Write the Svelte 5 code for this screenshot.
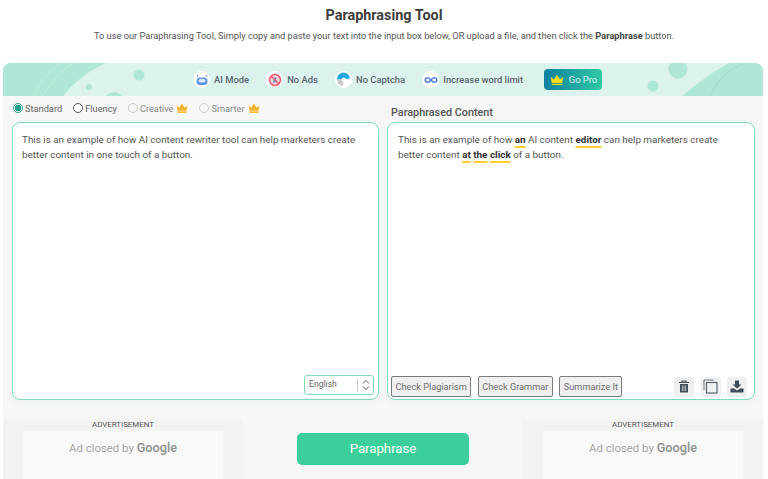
<script lang="ts">
  const modes = [
    { label: 'Standard', checked: true },
    { label: 'Fluency' },
    { label: 'Creative', pro: true },
    { label: 'Smarter', pro: true }
  ];
  const actions = ['Check Plagiarism', 'Check Grammar', 'Summarize It'];
</script>

{#snippet crown(w = 13)}
  <svg class="crown" width={w} height={w * 0.85} viewBox="0 0 20 17">
    <path d="M1 4l4.500 4L10 1l4.500 7L19 4l-1.500 9h-15z" fill="currentColor" />
    <rect x="2.500" y="14" width="15" height="2.500" fill="currentColor" />
  </svg>
{/snippet}

{#snippet ad()}
  <div class="ad">
    <div class="ad-label">ADVERTISEMENT</div>
    <div class="ad-box">Ad closed by <b>Google</b></div>
  </div>
{/snippet}

<header>
  <h1>Paraphrasing Tool</h1>
  <p>To use our Paraphrasing Tool, Simply copy and paste your text into the input box below, OR upload a file, and then click the <b>Paraphrase</b> button.</p>
</header>

<main>
  <div class="banner">
    <svg class="deco" width="760" height="33" viewBox="0 0 760 33">
      <path d="M0 0H103C85 8 70 20 60 33H0z" fill="#aee6d8" />
      <path d="M30 33C36 20 45 8 58 0M40 33C48 20 58 8 70 0" fill="none" stroke="#c3ecdf" stroke-width="1" />
      <circle cx="136" cy="12" r="5.500" fill="#aee6d8" />
      <circle cx="86" cy="24" r="3" fill="#aee6d8" />
      <circle cx="111" cy="39" r="10" fill="#aee6d8" />
      <circle cx="675" cy="6" r="9.500" fill="#aee6d8" />
      <circle cx="650" cy="23" r="5.500" fill="#aee6d8" />
      <path d="M679 33C695 20 710 8 727 0H760V33z" fill="#aee6d8" />
      <path d="M708 33C712 20 722 8 742 0" fill="none" stroke="#9fdfcf" stroke-width="1" />
    </svg>

    <div class="feature">
      <span class="ico">
        <svg width="14" height="14" viewBox="0 0 14 14">
          <rect x="1.500" y="4.500" width="11" height="7.500" rx="3.500" fill="#5f93e6" />
          <rect x="3.500" y="6" width="7" height="3.500" rx="1.700" fill="#dbe8fb" />
          <path d="M3 4L2 2M11 4l1-2" stroke="#5f93e6" stroke-width="1" />
        </svg>
      </span>
      AI Mode
    </div>
    <div class="feature">
      <span class="ico">
        <svg width="14" height="14" viewBox="0 0 14 14">
          <circle cx="7" cy="7" r="5.500" fill="#fbd3da" stroke="#ef5a6f" stroke-width="1.500" />
          <path d="M5 9.500l1.500-5h2l-1 5z" fill="#4f8fe0" />
          <path d="M3 3l8 8" stroke="#ef5a6f" stroke-width="1.500" />
        </svg>
      </span>
      No Ads
    </div>
    <div class="feature">
      <span class="ico">
        <svg width="15" height="15" viewBox="0 0 14 14">
          <path d="M1 7A6 6 0 0 1 13 6L9.500 6.500A2.600 2.600 0 0 0 5 7z" fill="#1ba9e0" />
          <path d="M1 7H5L7 9.500 6 13A6 6 0 0 1 1 7z" fill="#c9c9c9" />
        </svg>
      </span>
      No Captcha
    </div>
    <div class="feature">
      <span class="ico">
        <svg width="14" height="14" viewBox="0 0 14 14">
          <path d="M7 7C5.500 5 4.500 4.800 3.500 4.800a2.200 2.200 0 0 0 0 4.400C4.500 9.200 5.500 9 7 7s2.500-2.200 3.500-2.200a2.200 2.200 0 0 1 0 4.400C9.500 9.200 8.500 9 7 7z" fill="none" stroke="#4f7fdc" stroke-width="1.500" />
        </svg>
      </span>
      Increase word limit
    </div>
    <div class="go-pro">
      <span class="go-crown">{@render crown(14)}</span>
      Go Pro
    </div>
  </div>

  <div class="workspace">
    <section class="col">
      <div class="modes">
        {#each modes as m}
          <label class="mode" class:disabled={m.pro}>
            <span class="radio" class:checked={m.checked}></span>
            {m.label}
            {#if m.pro}<span class="pro-crown">{@render crown(12)}</span>{/if}
          </label>
        {/each}
      </div>
      <div class="editor">
        <p>This is an example of how AI content rewriter tool can help marketers create better content in one touch of a button.</p>
        <div class="editor-foot end">
          <div class="lang">
            <span class="lang-name">English</span>
            <span class="lang-arrows">
              <svg width="8" height="12" viewBox="0 0 8 12"><path d="M1 4.500L4 1.500 7 4.500M1 7.500L4 10.500 7 7.500" fill="none" stroke="#555" stroke-width="1" /></svg>
            </span>
          </div>
        </div>
      </div>
    </section>

    <section class="col result">
      <h2>Paraphrased Content</h2>
      <div class="editor">
        <p>This is an example of how <mark>an</mark> AI content <mark>editor</mark> can help marketers create better content <mark>at</mark> <mark>the</mark> <mark>click</mark> of a button.</p>
        <div class="editor-foot">
          {#each actions as a}
            <button class="action">{a}</button>
          {/each}
          <div class="tools">
            <span class="tool">
              <svg width="12" height="13" viewBox="0 0 12 13">
                <path d="M1 2.500h10M4 2.500V1h4v1.500" fill="none" stroke="#3f4c5a" stroke-width="1.200" />
                <path d="M2 4h8v8.500H2z" fill="#3f4c5a" />
                <path d="M4.300 5.500v5.500M6 5.500v5.500M7.700 5.500v5.500" stroke="#eee" stroke-width="0.700" />
              </svg>
            </span>
            <span class="tool">
              <svg width="15" height="15" viewBox="0 0 15 15">
                <path d="M10.500 1H1v10" fill="none" stroke="#6b7480" stroke-width="1" />
                <rect x="3.500" y="3.500" width="10.500" height="10.500" fill="none" stroke="#5a6470" stroke-width="1.200" />
              </svg>
            </span>
            <span class="tool">
              <svg width="14" height="13" viewBox="0 0 14 13">
                <path d="M5 0.500h4V4.500h2.500L7 8.500 2.500 4.500H5z" fill="#3f4c5a" />
                <path d="M0.500 8.500H4L7 10.500 10 8.500h3.500V12.500H0.500z" fill="#3f4c5a" />
              </svg>
            </span>
          </div>
        </div>
      </div>
    </section>
  </div>

  <div class="bottom">
    {@render ad()}
    <div class="submit"><button class="paraphrase">Paraphrase</button></div>
    {@render ad()}
  </div>
</main>

<style>
  :global(body) {
    margin: 0;
    background: #fff;
    overflow: hidden;
    height: 479px;
    font-family: Roboto, "Liberation Sans", sans-serif;
    color: #555;
  }

  header {
    height: 63px;
    text-align: center;
    overflow: hidden;
  }
  h1 {
    margin: 7px 0 0;
    font-size: 14.4px;
    line-height: 17px;
    font-weight: 700;
    color: #3d3d3d;
  }
  header p {
    margin: 5px 0 0;
    font-size: 9.25px;
    line-height: 14px;
    color: #555;
  }
  header b {
    color: #444;
  }

  main {
    margin: 0 5px 0 3px;
    height: 416px;
    background: #f7f7f7;
    border-radius: 8px 8px 0 0;
    overflow: hidden;
  }

  .banner {
    position: relative;
    height: 33px;
    background: #dcf2ed;
    display: flex;
    align-items: center;
    padding-left: 190px;
    font-size: 9.4px;
    font-weight: 500;
    color: #5b6670;
  }
  .deco {
    position: absolute;
    left: 0;
    top: 0;
  }
  .feature {
    position: relative;
    display: flex;
    align-items: center;
    gap: 4px;
    margin-right: 17.2px;
    white-space: nowrap;
  }
  .ico {
    width: 17px;
    height: 17px;
    border-radius: 50%;
    background: #fff;
    display: flex;
    align-items: center;
    justify-content: center;
  }
  .go-pro {
    position: relative;
    margin-left: 3.5px;
    box-sizing: border-box;
    width: 58px;
    height: 21px;
    padding-left: 6px;
    border-radius: 4px;
    background: linear-gradient(90deg, #10809f, #2ec9a4);
    color: #dff5ee;
    font-weight: 400;
    display: flex;
    align-items: center;
    gap: 5px;
  }
  .go-crown {
    display: flex;
    color: #f2dc1e;
  }

  .workspace {
    display: grid;
    grid-template-columns: 367px 368px;
    gap: 8px;
    padding: 0 7px 0 9px;
  }
  .col {
    display: flex;
    flex-direction: column;
  }
  .modes {
    height: 24px;
    margin-bottom: 2px;
    display: flex;
    align-items: center;
    padding-left: 1px;
    gap: 11px;
    font-size: 9.25px;
    color: #666;
  }
  .mode {
    display: flex;
    align-items: center;
    gap: 2px;
  }
  .mode.disabled {
    color: #8a8a8a;
  }
  .radio {
    box-sizing: border-box;
    width: 10px;
    height: 10px;
    border-radius: 50%;
    border: 1px solid #555;
    background: #fff;
  }
  .radio.checked {
    border-color: #1f9d88;
    background: radial-gradient(circle, #1f9d88 0 3px, #fff 3.5px);
  }
  .disabled .radio {
    border-color: #ccc;
    background: #f7f7f7;
  }
  .pro-crown {
    display: flex;
    color: #f3b32a;
    margin-left: 1px;
  }
  h2 {
    margin: 0;
    height: 26px;
    padding: 10px 0 0 4px;
    box-sizing: border-box;
    font-size: 10.8px;
    line-height: 14px;
    font-weight: 500;
    color: #555;
  }

  .editor {
    box-sizing: border-box;
    height: 278px;
    border: 1px solid #7edcb9;
    border-radius: 8px;
    background: #fff;
    box-shadow: 0 2px 8px rgba(90, 210, 170, 0.08);
    display: flex;
    flex-direction: column;
    justify-content: space-between;
    padding: 10px 3px 2px;
  }
  .editor p {
    margin: 0 6px;
    font-size: 9.9px;
    line-height: 14.5px;
    color: #555;
  }
  .result .editor p {
    margin-left: 7px;
  }
  mark {
    background: none;
    color: #333;
    font-weight: 700;
    text-decoration: underline;
    text-decoration-color: #fbcf33;
    text-decoration-thickness: 1.5px;
    text-underline-offset: 2.5px;
  }
  .editor-foot {
    display: flex;
    align-items: center;
    gap: 6.5px;
  }
  .editor-foot.end {
    justify-content: flex-end;
  }

  .lang {
    box-sizing: border-box;
    width: 70px;
    height: 20px;
    margin: 0 1px 2px 0;
    border: 1px solid #7edcb9;
    border-radius: 3px;
    background: #fff;
    display: flex;
    align-items: center;
    justify-content: space-between;
    font-size: 8.6px;
    color: #666;
  }
  .lang-name {
    padding-left: 4px;
    margin-top: -2px;
  }
  .lang-arrows {
    display: flex;
    align-items: center;
    border-left: 1px solid #ccc;
    height: 13px;
    padding: 0 3px 0 4px;
  }

  .action {
    box-sizing: border-box;
    height: 21px;
    padding: 0 3.5px;
    border: 1px solid #7b7b7b;
    border-radius: 2px;
    background: #efefef;
    font: 9.2px Roboto, sans-serif;
    color: #707070;
  }
  .tools {
    margin-left: auto;
    margin-right: 4px;
    display: flex;
    gap: 6.5px;
  }
  .tool {
    width: 20px;
    height: 20px;
    border-radius: 3px;
    background: #f0f0f0;
    display: flex;
    align-items: center;
    justify-content: center;
  }

  .bottom {
    display: grid;
    grid-template-columns: 240px 1fr 240px;
    margin-top: 19px;
  }
  .ad {
    height: 60px;
    background: #f3f3f3;
    padding: 0 20px;
    text-align: center;
  }
  .ad-label {
    height: 12px;
    font-size: 7.9px;
    line-height: 12px;
    color: #555;
  }
  .ad-box {
    height: 48px;
    background: #f9f9f9;
    font-size: 11.4px;
    line-height: 34px;
    color: #a5a5a5;
  }
  .ad-box b {
    font-size: 12.7px;
    font-weight: 500;
    color: #8f8f8f;
  }
  .submit {
    display: flex;
    justify-content: center;
    padding-top: 14px;
  }
  .paraphrase {
    width: 172px;
    height: 32px;
    padding: 0 0 2px;
    border: none;
    border-radius: 5px;
    background: #3dcf9b;
    color: #fff;
    font: 13.2px Roboto, sans-serif;
  }
</style>
